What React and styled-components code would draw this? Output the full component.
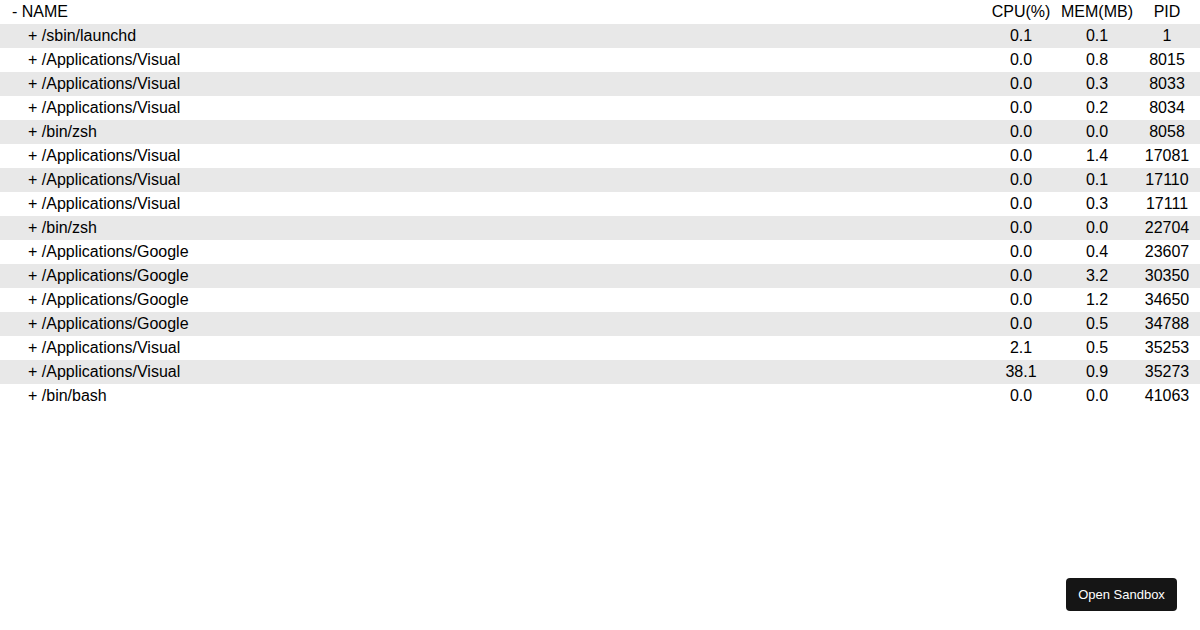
import styled, { createGlobalStyle } from "styled-components";

const GlobalStyle = createGlobalStyle`
  body {
    margin: 0;
    font-family: "Liberation Sans", Arial, sans-serif;
    color: #000;
    background: #fff;
  }
`;

const processes = [
  { name: "/sbin/launchd", cpu: "0.1", mem: "0.1", pid: 1 },
  { name: "/Applications/Visual", cpu: "0.0", mem: "0.8", pid: 8015 },
  { name: "/Applications/Visual", cpu: "0.0", mem: "0.3", pid: 8033 },
  { name: "/Applications/Visual", cpu: "0.0", mem: "0.2", pid: 8034 },
  { name: "/bin/zsh", cpu: "0.0", mem: "0.0", pid: 8058 },
  { name: "/Applications/Visual", cpu: "0.0", mem: "1.4", pid: 17081 },
  { name: "/Applications/Visual", cpu: "0.0", mem: "0.1", pid: 17110 },
  { name: "/Applications/Visual", cpu: "0.0", mem: "0.3", pid: 17111 },
  { name: "/bin/zsh", cpu: "0.0", mem: "0.0", pid: 22704 },
  { name: "/Applications/Google", cpu: "0.0", mem: "0.4", pid: 23607 },
  { name: "/Applications/Google", cpu: "0.0", mem: "3.2", pid: 30350 },
  { name: "/Applications/Google", cpu: "0.0", mem: "1.2", pid: 34650 },
  { name: "/Applications/Google", cpu: "0.0", mem: "0.5", pid: 34788 },
  { name: "/Applications/Visual", cpu: "2.1", mem: "0.5", pid: 35253 },
  { name: "/Applications/Visual", cpu: "38.1", mem: "0.9", pid: 35273 },
  { name: "/bin/bash", cpu: "0.0", mem: "0.0", pid: 41063 },
];

const Tree = styled.div`
  display: flex;
  flex-direction: column;
`;

const Row = styled.div`
  display: grid;
  grid-template-columns: 1fr 78px 74px 66px;
  height: 24px;
  align-items: center;
  font-size: 16px;
  line-height: 24px;
  background-color: ${(props) => (props.striped ? "#e8e8e8" : "#fff")};
`;

const NameCell = styled.div`
  padding-left: ${(props) => (props.depth ? 28 : 12)}px;
  white-space: nowrap;
`;

const NumCell = styled.div`
  text-align: center;
  white-space: nowrap;
`;

const SandboxButton = styled.button`
  position: fixed;
  right: 23px;
  bottom: 19px;
  width: 111px;
  height: 33px;
  border: none;
  border-radius: 4px;
  background: #151515;
  color: #fff;
  font-family: "Liberation Sans", Arial, sans-serif;
  font-size: 13px;
  cursor: pointer;
`;

const App = () => {
  return (
    <>
      <GlobalStyle />
      <Tree>
        <Row>
          <NameCell>- NAME</NameCell>
          <NumCell>CPU(%)</NumCell>
          <NumCell>MEM(MB)</NumCell>
          <NumCell>PID</NumCell>
        </Row>
        {processes.map((p, i) => (
          <Row key={p.pid} striped={i % 2 === 0}>
            <NameCell depth={1}>+ {p.name}</NameCell>
            <NumCell>{p.cpu}</NumCell>
            <NumCell>{p.mem}</NumCell>
            <NumCell>{p.pid}</NumCell>
          </Row>
        ))}
      </Tree>
      <SandboxButton>Open Sandbox</SandboxButton>
    </>
  );
};

export default App;
